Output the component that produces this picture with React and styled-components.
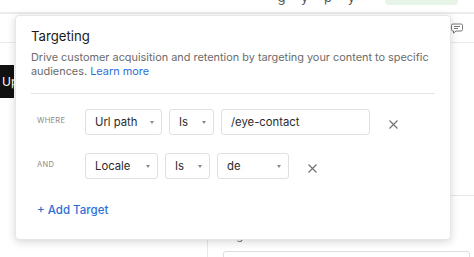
import styled, { createGlobalStyle } from "styled-components";

const GlobalStyle = createGlobalStyle`
  html, body {
    margin: 0;
    padding: 0;
    background: #ffffff;
    font-family: Inter, "Noto Sans", sans-serif;
    overflow: hidden;
  }
`;

const Page = styled.div`
  position: relative;
  width: 474px;
  height: 257px;
  overflow: hidden;
  background: #fff;
`;

const TopBar = styled.header`
  height: 12px;
  border-bottom: 2px solid #ececec;
  display: flex;
  justify-content: flex-end;
  align-items: flex-start;
  padding-right: 16px;
  overflow: hidden;
`;

const Clipped = styled.span`
  margin-top: -11px;
  margin-right: 24px;
  font-size: 13px;
  color: #555;
  letter-spacing: 6px;
`;

const GreenPill = styled.div`
  width: 73px;
  height: 5px;
  background: #e7f5e9;
  border-radius: 0 0 4px 4px;
`;

const Toolbar = styled.div`
  height: 28px;
  border-bottom: 1px solid #e9e9e9;
  display: flex;
  justify-content: flex-end;
  align-items: center;
  padding-right: 11px;
`;

const Body = styled.div`
  display: flex;
  height: 214px;
`;

const Sidebar = styled.aside`
  width: 207px;
  flex-shrink: 0;
  border-right: 1px solid #e8e8e8;
  padding-top: 22px;
`;

const BlackButton = styled.div`
  width: 14px;
  height: 33px;
  background: #111;
  color: #fff;
  font-size: 12px;
  display: flex;
  align-items: center;
  overflow: hidden;
  white-space: nowrap;
  padding-left: 2px;
  box-sizing: border-box;
`;

const RightPanel = styled.section`
  flex: 1;
  display: flex;
  flex-direction: column;
`;

const Section = styled.div`
  height: 152px;
  flex-shrink: 0;
  border-bottom: 1px solid #e8e8e8;
`;

const FieldLabel = styled.div`
  flex-shrink: 0;
  margin: 34px 0 0 15px;
  font-size: 11px;
  line-height: 13px;
  color: #666;
`;

const FieldBox = styled.div`
  flex-shrink: 0;
  margin: 8px 4px 0 15px;
  height: 24px;
  border: 1px solid #dedede;
  border-radius: 3px;
`;

const Popover = styled.div`
  position: absolute;
  left: 15px;
  top: 15px;
  width: 436px;
  box-sizing: border-box;
  background: #fff;
  border: 1px solid #e6e6e6;
  border-radius: 4px;
  box-shadow: 0 2px 8px rgba(0, 0, 0, 0.16);
  padding: 12px 15px 21px 15px;
`;

const Title = styled.h2`
  margin: 0;
  font-size: 13.2px;
  line-height: 16px;
  font-weight: 400;
  color: #1a1a1a;
`;

const Description = styled.p`
  margin: 6px 0 0;
  font-size: 10.9px;
  line-height: 14px;
  color: #6b6b6b;
`;

const Link = styled.a`
  color: #2f6fd8;
  text-decoration: none;
`;

const Divider = styled.hr`
  margin: 15px 0 15px;
  border: 0;
  border-top: 1px solid #e4e4e4;
`;

const Rows = styled.div`
  display: flex;
  flex-direction: column;
  gap: 18px;
  padding-left: 6px;
`;

const Row = styled.div`
  display: flex;
  align-items: center;
  height: 26px;
`;

const RowLabel = styled.span`
  width: 48px;
  font-size: 7.5px;
  color: #8a8a8a;
  letter-spacing: 0.3px;
  margin-top: -3px;
`;

const Field = styled.div`
  width: ${(p) => p.$w}px;
  height: 26px;
  box-sizing: border-box;
  margin-right: 7px;
  border: 1px solid #e0e0e0;
  border-radius: 3px;
  display: flex;
  align-items: center;
  justify-content: space-between;
  padding: 0 7px 0 9px;
  font-size: 11.3px;
  color: #2b2b2b;
`;

const Caret = styled.span`
  width: 0;
  height: 0;
  border-left: 2.5px solid transparent;
  border-right: 2.5px solid transparent;
  border-top: 3px solid #8a8a8a;
`;

const Remove = styled.button`
  margin-left: 12px;
  border: 0;
  background: none;
  padding: 0;
  display: flex;
  margin-top: 5px;
`;

const AddTarget = styled.button`
  margin: 23px 0 0 6px;
  border: 0;
  background: none;
  padding: 0;
  font-family: inherit;
  font-size: 11.5px;
  line-height: 16px;
  font-weight: 500;
  color: #2f6fd8;
`;

function ChatIcon() {
  return (
    <svg width="12" height="11" viewBox="0 0 12 11" fill="none" stroke="#777" strokeWidth="1">
      <path d="M2 1h8a1.5 1.5 0 0 1 1.5 1.5v4A1.5 1.5 0 0 1 10 8H5l-2.5 2.2V8H2A1.5 1.5 0 0 1 .5 6.5v-4A1.5 1.5 0 0 1 2 1z" />
      <path d="M3 3.5h6M3 5.5h4" />
    </svg>
  );
}

function CloseIcon() {
  return (
    <svg width="9" height="9" viewBox="0 0 9 9" stroke="#6f6f6f" strokeWidth="1.1">
      <path d="M.5.5l8 8M8.5.5l-8 8" />
    </svg>
  );
}

function Select({ value, width }) {
  return (
    <Field $w={width}>
      <span>{value}</span>
      <Caret />
    </Field>
  );
}

export default function App() {
  return (
    <Page>
      <GlobalStyle />
      <TopBar>
        <Clipped>g y p y</Clipped>
        <GreenPill />
      </TopBar>
      <Toolbar>
        <ChatIcon />
      </Toolbar>
      <Body>
        <Sidebar>
          <BlackButton>Upgrade</BlackButton>
        </Sidebar>
        <RightPanel>
          <Section />
          <FieldLabel>Page url</FieldLabel>
          <FieldBox />
        </RightPanel>
      </Body>

      <Popover>
        <Title>Targeting</Title>
        <Description>
          Drive customer acquisition and retention by targeting your content to specific
          audiences. <Link href="#">Learn more</Link>
        </Description>
        <Divider />
        <Rows>
          <Row>
            <RowLabel>WHERE</RowLabel>
            <Select value="Url path" width={77} />
            <Select value="Is" width={45} />
            <Field $w={149}>/eye-contact</Field>
            <Remove>
              <CloseIcon />
            </Remove>
          </Row>
          <Row>
            <RowLabel>AND</RowLabel>
            <Select value="Locale" width={73} />
            <Select value="Is" width={45} />
            <Select value="de" width={72} />
            <Remove>
              <CloseIcon />
            </Remove>
          </Row>
        </Rows>
        <AddTarget>+ Add Target</AddTarget>
      </Popover>
    </Page>
  );
}
